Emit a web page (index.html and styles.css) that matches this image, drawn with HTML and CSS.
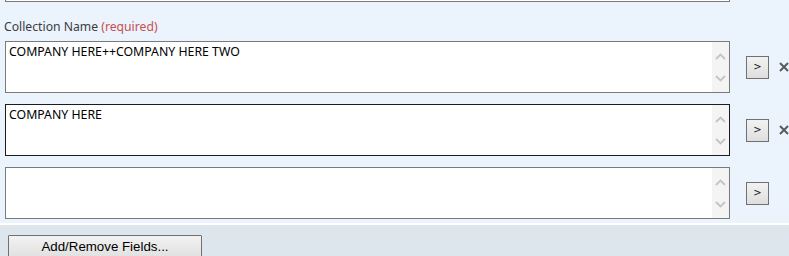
FILE: index.html
```html
<!DOCTYPE html>
<html>
<head>
<meta charset="utf-8">
<link rel="stylesheet" href="styles.css">
</head>
<body>
<div class="panel">
  <div class="prev-field"></div>
  <div class="label">Collection Name <span class="req">(required)</span></div>
  <div class="rows">
    <div class="row">
      <div class="field">
        <div class="text">COMPANY HERE++COMPANY HERE TWO</div>
        <div class="scroll">
          <svg width="11" height="7" viewBox="0 0 11 7"><polyline points="1,6 5.5,1.5 10,6" /></svg>
          <svg width="11" height="7" viewBox="0 0 11 7"><polyline points="1,1 5.5,5.5 10,1" /></svg>
        </div>
      </div>
      <button class="go">&gt;</button>
      <span class="del"><svg width="10" height="10" viewBox="0 0 10 10"><path d="M1 1 L9 9 M9 1 L1 9"/></svg></span>
    </div>
    <div class="row">
      <div class="field active">
        <div class="text">COMPANY HERE</div>
        <div class="scroll">
          <svg width="11" height="7" viewBox="0 0 11 7"><polyline points="1,6 5.5,1.5 10,6" /></svg>
          <svg width="11" height="7" viewBox="0 0 11 7"><polyline points="1,1 5.5,5.5 10,1" /></svg>
        </div>
      </div>
      <button class="go">&gt;</button>
      <span class="del"><svg width="10" height="10" viewBox="0 0 10 10"><path d="M1 1 L9 9 M9 1 L1 9"/></svg></span>
    </div>
    <div class="row">
      <div class="field">
        <div class="text"></div>
        <div class="scroll">
          <svg width="11" height="7" viewBox="0 0 11 7"><polyline points="1,6 5.5,1.5 10,6" /></svg>
          <svg width="11" height="7" viewBox="0 0 11 7"><polyline points="1,1 5.5,5.5 10,1" /></svg>
        </div>
      </div>
      <button class="go">&gt;</button>
    </div>
  </div>
</div>
<div class="footer">
  <button class="addremove">Add/Remove Fields...</button>
</div>
</body>
</html>
```
FILE: styles.css
```css
html, body {
  margin: 0;
  padding: 0;
  background: #dce6ec;
}
body {
  width: 789px;
  height: 256px;
  overflow: hidden;
  font-family: "Noto Sans", "DejaVu Sans", sans-serif;
}
.panel {
  background: #ebf3fc;
  padding: 0 0 4px 5px;
  border-bottom: 2px solid #ffffff;
}
.prev-field {
  width: 723px;
  height: 1px;
  background: #fff;
  border: 1px solid #7a7a7a;
  border-top: none;
}
.label {
  margin-top: 17px;
  margin-left: -1px;
  font-size: 12.2px;
  line-height: 16px;
  color: #3c3c3c;
  height: 22px;
}
.req {
  color: #c8504f;
}
.rows {
  display: flex;
  flex-direction: column;
  gap: 11px;
}
.row {
  display: flex;
  align-items: center;
  height: 52px;
}
.field {
  width: 723px;
  height: 50px;
  border: 1px solid #7a7a7a;
  background: #fff;
  display: flex;
}
.field.active {
  border-color: #1c1c1c;
}
.text {
  flex: 1;
  padding: 2px 0 0 3px;
  font-size: 12.3px;
  line-height: 16px;
  color: #000;
}
.scroll {
  width: 17px;
  background: #f4f4f4;
  display: flex;
  flex-direction: column;
  justify-content: space-between;
  align-items: center;
  padding: 11px 0 10px;
}
.scroll svg {
  display: block;
}
.scroll polyline {
  fill: none;
  stroke: #c4c4c4;
  stroke-width: 1.8;
}
.go {
  margin-left: 16px;
  width: 23px;
  height: 23px;
  padding: 0;
  border: 1px solid #707070;
  background: linear-gradient(#f2f2f2, #dedede);
  font-family: "DejaVu Sans", sans-serif;
  font-size: 10px;
  line-height: 20px;
  color: #1a1a1a;
}
.del {
  margin-left: 10px;
  display: flex;
}
.del path {
  stroke: #5a5a5a;
  stroke-width: 2;
}
.footer {
  padding: 9px 0 0 8px;
}
.addremove {
  width: 194px;
  height: 24px;
  padding: 0;
  border: 1px solid #707070;
  border-radius: 1px;
  background: linear-gradient(#f2f2f2, #e0e0e0);
  font-family: "Liberation Sans", Arial, sans-serif;
  font-size: 13.3px;
  color: #000;
  line-height: 21px;
}
```
